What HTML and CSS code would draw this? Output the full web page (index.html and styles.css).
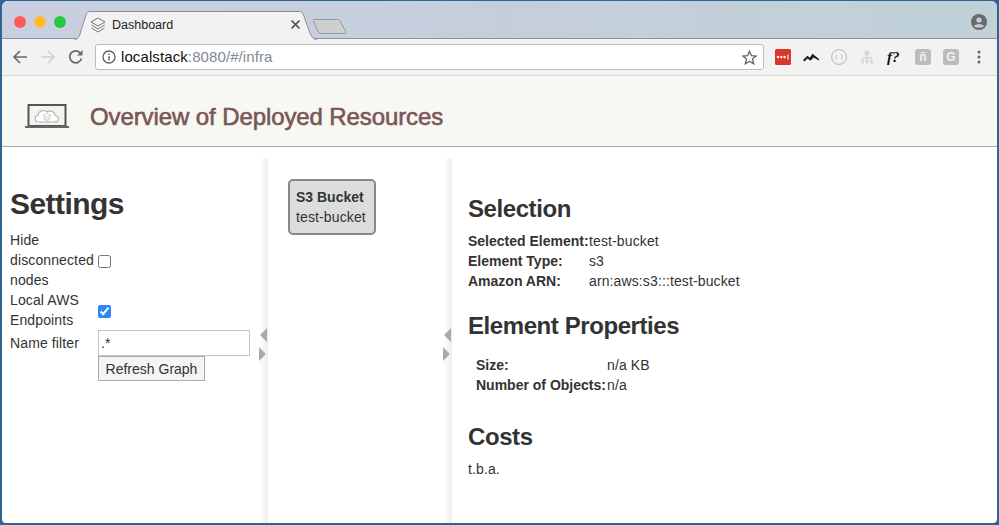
FILE: index.html
```html
<!DOCTYPE html>
<html lang="en">
<head>
<meta charset="utf-8">
<title>Dashboard</title>
<link rel="stylesheet" href="styles.css">
</head>
<body>
<div class="window">
  <div class="titlebar">
    <div class="lights">
      <span class="light red"></span><span class="light yellow"></span><span class="light green"></span>
    </div>
    <div class="tab">
      <svg class="tab-shape" width="246" height="29" viewBox="0 0 246 29"><path d="M0.5 28.5 C4 28 5 26 6 23 L12 4 C12.800 1.500 14 .5 16 .5 H225 C227 .5 228.500 1.500 229.500 4 L236 22 C237.500 26 239 28 243 28.500" fill="#f2f2f2" stroke="#8b8f96"/></svg>
      <svg class="tab-icon" width="16" height="16" viewBox="0 0 16 16" fill="none" stroke="#777" stroke-width="1"><path d="M8 1 L15 5 L8 9 L1 5 Z"/><path d="M1.500 8 L8 12 L14.500 8"/><path d="M1.500 11 L8 15 L14.500 11"/></svg>
      <span class="tab-title">Dashboard</span>
      <svg class="tab-close" width="9" height="9" viewBox="0 0 9 9" stroke="#555" stroke-width="1.600"><path d="M.5 .5 L8.500 8.500 M8.500 .5 L.5 8.500"/></svg>
    </div>
    <svg class="ghost-tab" width="34" height="17" viewBox="0 0 34 17"><path d="M1 1.500 H25 C26 1.500 26.500 2 27 3 L33 14 C33.500 15 33 15.500 32 15.500 H7 C6 15.500 5.500 15 5 14 L.5 3 C0 2 .5 1.500 1 1.500 Z" fill="#cfcfcf" stroke="#96999f"/></svg>
    <svg class="profile" width="16" height="16" viewBox="0 0 16 16"><circle cx="8" cy="8" r="8" fill="#6a6a6a"/><circle cx="8" cy="6" r="2.600" fill="#c4cfd9"/><path d="M3 12 C4 9.500 12 9.500 13 12 C11.500 14 4.500 14 3 12 Z" fill="#c4cfd9"/></svg>
  </div>

  <div class="toolbar">
    <svg class="nav-icon" width="16" height="16" viewBox="0 0 16 16" fill="none" stroke="#6b6b6b" stroke-width="1.700"><path d="M15 8 H2 M8 2 L2 8 L8 14"/></svg>
    <svg class="nav-icon" width="16" height="16" viewBox="0 0 16 16" fill="none" stroke="#cfcfcf" stroke-width="1.700"><path d="M1 8 H14 M8 2 L14 8 L8 14"/></svg>
    <svg class="nav-icon" width="16" height="16" viewBox="0 0 16 16" fill="none" stroke="#6b6b6b" stroke-width="1.800"><path d="M13.500 9.500 A6 6 0 1 1 12.200 3.800"/><path d="M14.500 1 V6.500 H9 Z" fill="#6b6b6b" stroke="none"/></svg>
    <div class="omnibox">
      <svg width="14" height="14" viewBox="0 0 14 14" fill="none" stroke="#5f5f5f" stroke-width="1.300"><circle cx="7" cy="7" r="6"/><path d="M7 6.200 V10.500 M7 3.500 V5" stroke-width="1.400"/></svg>
      <span class="url"><span class="url-host">localstack</span>:8080/#/infra</span>
      <svg class="star" width="15" height="15" viewBox="0 0 15 15" fill="none" stroke="#666" stroke-width="1.300"><path d="M7.500 1.200 L9.400 5.600 L14.200 6 L10.500 9.100 L11.700 13.800 L7.500 11.300 L3.300 13.800 L4.500 9.100 L.8 6 L5.600 5.600 Z"/></svg>
    </div>
    <div class="extensions">
      <svg width="16" height="16" viewBox="0 0 16 16"><rect width="16" height="16" rx="1.500" fill="#d9372c"/><circle cx="3" cy="8" r="1.200" fill="#fff"/><circle cx="6.300" cy="8" r="1.200" fill="#fff"/><circle cx="9.600" cy="8" r="1.200" fill="#fff"/><rect x="12.500" y="5.500" width="1" height="5" fill="#fff"/></svg>
      <svg width="16" height="16" viewBox="0 0 16 16" fill="#1c1c1c"><path d="M0 11 L4.500 6.800 L6.800 8.800 L9.500 4.800 L16 10 L16 11.500 L10.500 8.500 L8.300 11 L7 11.500 L4.500 9.500 L1.500 12.500 Z"/></svg>
      <svg width="16" height="16" viewBox="0 0 16 16" fill="none" stroke="#b5b5b5"><circle cx="8" cy="8" r="7.400"/><path d="M6 5.500 C4.800 5.500 5.500 7.800 4.500 8 C5.500 8.200 4.800 10.500 6 10.500 M10 5.500 C11.200 5.500 10.500 7.800 11.500 8 C10.500 8.200 11.200 10.500 10 10.500" stroke-width=".8"/></svg>
      <svg width="16" height="16" viewBox="0 0 16 16" fill="#d8d8d8"><circle cx="8" cy="4" r="2.500"/><rect x="7" y="6" width="2" height="5"/><rect x="3" y="8" width="10" height="1.500"/><rect x="2" y="10.500" width="3" height="4"/><rect x="6.500" y="10.500" width="3" height="4"/><rect x="11" y="10.500" width="3" height="4"/></svg>
      <span class="ext-f">f?</span>
      <span class="ext-box">ñ</span>
      <span class="ext-box">G</span>
      <svg class="kebab" width="4" height="16" viewBox="0 0 4 16" fill="#666"><circle cx="2" cy="3" r="1.500"/><circle cx="2" cy="8" r="1.500"/><circle cx="2" cy="13" r="1.500"/></svg>
    </div>
  </div>

  <header class="page-header">
    <svg class="logo" width="46" height="26" viewBox="0 0 46 26" fill="none">
      <rect x="4.500" y="2" width="37" height="21" fill="#f4f4ef" stroke="#555" stroke-width="2"/>
      <path d="M1 24 H45" stroke="#666" stroke-width="2"/>
      <path d="M15 19 C10 19 10 13 14 12.500 C14 8 20 6 23 9 C26 6.500 31 8.500 31 12.500 C35.500 13 35.500 19 31 19 Z" fill="#fff" stroke="#b0b0b0" stroke-width="1.100"/>
      <path d="M23 10.500 L27 12.500 L23 14.500 L19 12.500 Z M19.500 14.500 L23 16.500 L26.500 14.500 M19.500 16 L23 18 L26.500 16" stroke="#bbb" stroke-width=".7"/>
    </svg>
    <h1 class="page-title">Overview of Deployed Resources</h1>
  </header>

  <main class="content">
    <section class="panel settings">
      <div class="panel-body">
        <h2 class="settings-title">Settings</h2>
        <table class="settings-table">
          <tr>
            <td class="settings-label">Hide disconnected nodes</td>
            <td class="settings-control"><input type="checkbox" class="check"></td>
          </tr>
          <tr>
            <td class="settings-label">Local AWS Endpoints</td>
            <td class="settings-control"><input type="checkbox" class="check" checked></td>
          </tr>
          <tr>
            <td class="settings-label top">Name filter</td>
            <td class="settings-control">
              <input type="text" class="filter" value=".*">
              <button type="button" class="refresh">Refresh Graph</button>
            </td>
          </tr>
        </table>
      </div>
      <div class="gutter"><span class="arrow arrow-left"></span><span class="arrow arrow-right"></span></div>
    </section>

    <section class="panel graph">
      <div class="panel-body">
        <div class="node"><strong>S3 Bucket</strong><br>test-bucket</div>
      </div>
      <div class="gutter"><span class="arrow arrow-left"></span><span class="arrow arrow-right"></span></div>
    </section>

    <section class="details">
      <h3 class="section-title first">Selection</h3>
      <table class="info">
        <tr><th>Selected Element:</th><td>test-bucket</td></tr>
        <tr><th>Element Type:</th><td>s3</td></tr>
        <tr><th>Amazon ARN:</th><td>arn:aws:s3:::test-bucket</td></tr>
      </table>
      <h3 class="section-title">Element Properties</h3>
      <table class="info props">
        <tr><th>Size:</th><td>n/a KB</td></tr>
        <tr><th>Number of Objects:</th><td>n/a</td></tr>
      </table>
      <h3 class="section-title costs">Costs</h3>
      <p class="tba">t.b.a.</p>
    </section>
  </main>
</div>
</body>
</html>
```
FILE: styles.css
```css
* { box-sizing: border-box; }
html, body { height: 100%; }
body {
  margin: 0;
  overflow: hidden;
  background: #2f6591;
  padding: 1px 2px 2px 2px;
  font-family: "Liberation Sans", Arial, sans-serif;
  font-size: 14px;
  line-height: 20px;
  letter-spacing: .12px;
  color: #333;
}
.window {
  height: 522px;
  background: #fff;
  border-radius: 6px 6px 4px 4px;
  overflow: hidden;
  display: flex;
  flex-direction: column;
}
.titlebar {
  height: 38px;
  flex: none;
  display: flex;
  align-items: center;
  background: linear-gradient(90deg, #c9cfe0 0%, #c5cfdc 50%, #c0d1d8 100%);
  border-bottom: 1px solid #8e9299;
}
.lights { display: flex; gap: 8px; margin-left: 12px; width: 60px; flex: none; }
.light { width: 12px; height: 12px; border-radius: 50%; margin-top: 4px; }
.red { background: #fc5b57; }
.yellow { background: #fdbc2c; }
.green { background: #27c83f; }
.tab {
  position: relative;
  width: 243px;
  height: 38px;
  flex: none;
  display: flex;
  align-items: center;
  padding: 10px 0 0 16px;
}
.tab-shape { position: absolute; left: 0; top: 10px; }
.tab-icon { position: relative; flex: none; }
.tab-title { position: relative; font-size: 12.500px; letter-spacing: 0; color: #222; margin-left: 6px; }
.tab-close { position: relative; margin-left: 118px; }
.ghost-tab { margin-left: -4px; margin-top: 14px; flex: none; }
.profile { margin-left: auto; margin-right: 10px; margin-top: 4px; }
.toolbar {
  height: 37px;
  flex: none;
  display: flex;
  align-items: center;
  background: #f2f2f2;
  border-bottom: 1px solid #d9d9d2;
  padding-left: 10px;
}
.nav-icon { flex: none; margin-right: 12px; }
.omnibox {
  width: 669px;
  height: 26px;
  margin-left: -1px;
  flex: none;
  display: flex;
  align-items: center;
  gap: 5px;
  padding: 0 6px;
  background: #fff;
  border: 1px solid #bcbcbc;
  border-radius: 3px;
}
.url { font-size: 15px; letter-spacing: .1px; color: #808a94; }
.url-host { color: #111; }
.star { margin-left: auto; }
.extensions { display: flex; align-items: center; gap: 12px; margin-left: 11px; }
.ext-f { width: 16px; font: italic bold 15px "Liberation Serif", serif; color: #111; }
.ext-box {
  width: 16px;
  height: 16px;
  background: #bcbcbc;
  color: #f2f2f2;
  border-radius: 3px;
  text-align: center;
  font-size: 12px;
  font-weight: bold;
  line-height: 16px;
}
.kebab { margin-left: 6px; }
.page-header {
  height: 71px;
  flex: none;
  display: flex;
  align-items: center;
  background: #f8f8f3;
  border-bottom: 1px solid #aaa;
  padding-left: 22px;
}
.logo { flex: none; margin-top: 10px; }
.page-title {
  margin: 12px 0 0 20px;
  font-size: 24px;
  font-weight: 400;
  letter-spacing: -.1px;
  -webkit-text-stroke: .6px #7a5656;
  color: #7a5656;
}
.content { flex: 1; min-height: 0; display: flex; padding-top: 12px; }
.panel { display: flex; flex: none; }
.settings { width: 266px; }
.graph { width: 184px; }
.panel-body { flex: 1; min-width: 0; }
.settings .panel-body { padding-left: 8px; }
.graph .panel-body { padding: 20px 0 0 20px; }
.gutter {
  width: 8px;
  flex: none;
  display: flex;
  flex-direction: column;
  align-items: center;
  justify-content: center;
  gap: 5px;
  padding: 6px 1px 0 0;
  background: linear-gradient(90deg, #fff, #ececec);
}
.arrow { width: 0; height: 0; border-top: 7px solid transparent; border-bottom: 7px solid transparent; }
.arrow-left { border-right: 7px solid #aaa; }
.arrow-right { border-left: 7px solid #aaa; margin-left: -2px; }
.settings-title {
  margin: 28px 0 10px;
  font-size: 30px;
  line-height: 33px;
  font-weight: bold;
  letter-spacing: -.55px;
}
.settings-table { border-collapse: collapse; width: 240px; }
.settings-table td { padding: 0; }
.settings-label { width: 88px; }
.top { vertical-align: top; padding-top: 3px !important; }
.settings-control { vertical-align: middle; }
.check { display: block; width: 13px; height: 13px; margin: 3px 0 0; accent-color: #2f86f6; }
.filter {
  display: block;
  width: 152px;
  height: 26px;
  margin: 0;
  padding: 0 2px;
  border: 1px solid #c4c4c4;
  background: #fff;
  color: #333;
  font: 14px "Liberation Sans", Arial, sans-serif;
}
.refresh {
  display: block;
  width: 107px;
  height: 25px;
  padding: 0;
  border: 1px solid #aaa;
  background: #f4f4f4;
  color: #333;
  font: 14px "Liberation Sans", Arial, sans-serif;
}
.node {
  width: 88px;
  height: 56px;
  padding: 6px;
  background: #ddd;
  border: 2px solid #888;
  border-radius: 5px;
}
.node strong { letter-spacing: 0; }
.details { flex: 1; min-width: 0; padding: 0 0 0 16px; }
.section-title {
  margin: 22px 0 9px;
  font-size: 24px;
  line-height: 26px;
  font-weight: bold;
  letter-spacing: -.42px;
}
.section-title.first { margin-top: 37px; }
.info { border-collapse: collapse; }
.info th { padding: 0; text-align: left; font-weight: bold; width: 121px; letter-spacing: 0; }
.info td { padding: 0; }
.props { margin: 16px 0 0 8px; }
.info.props th { width: 131px; }
.costs { margin-top: 29px; }
.tba { margin: 0; }
```
